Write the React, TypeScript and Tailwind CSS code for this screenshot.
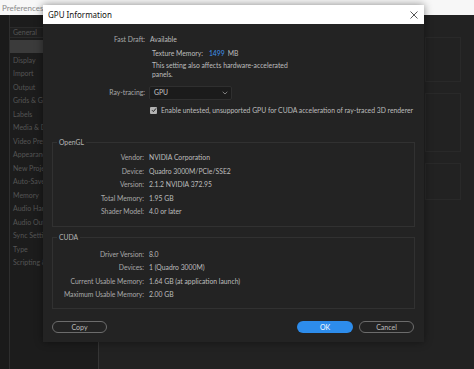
import React from "react";

const sidebarItems = [
  "Display",
  "Import",
  "Output",
  "Grids & Guides",
  "Labels",
  "Media & Disk Cache",
  "Video Preview",
  "Appearance",
  "New Project",
  "Auto-Save",
  "Memory",
  "Audio Hardware",
  "Audio Output",
  "Sync Settings",
  "Type",
  "Scripting & Expressions",
];

function Row({ label, value }: { label: string; value: React.ReactNode }) {
  return (
    <>
      <div className="h-[13.5px] flex items-center justify-end text-[#a9a9a9] whitespace-nowrap">{label}</div>
      <div className="h-[13.5px] flex items-center text-[#bdbdbd] whitespace-nowrap">{value}</div>
    </>
  );
}

export default function App() {
  const font = { fontFamily: 'Lato, "Open Sans", sans-serif' };
  return (
    <div className="relative w-[474px] h-[369px] overflow-hidden bg-[#222222]" style={font}>
      {/* Preferences window (background) */}
      <div className="flex flex-col w-full h-full">
        <div className="h-[15px] bg-[#f7f7f7] flex items-center pl-[2px] text-[8px] text-[#8a8a8a] shrink-0">
          Preferences
        </div>
        <div className="flex flex-1 min-h-0 bg-[#1e1e1e]">
          <div className="w-[9px] bg-[#1a1a1a] shrink-0" />
          <div className="w-[90px] shrink-0 border-l border-[#2e2e2e] border-r border-r-[#353535] bg-[#1c1c1c] pt-[12px] text-[7px] text-[#555555]">
            <div className="h-[11px] flex items-center pl-[3px] border-y border-[#2a2a2a] bg-[#1f1f1f]">General</div>
            <div className="h-[13px] mt-[2px] bg-[#3b3b3b]" />
            {sidebarItems.map((s) => (
              <div key={s} className="h-[13.5px] flex items-center pl-[3px] whitespace-nowrap">
                {s}
              </div>
            ))}
          </div>
          <div className="flex-1 bg-[#222222] flex justify-end pr-[13px]">
            <div className="w-[36px] flex flex-col pt-[22px] gap-[11px]">
              <div className="h-[45px] border border-[#292929]" />
              <div className="h-[59px] border border-[#292929]" />
              <div className="h-[37px] border border-[#292929]" />
            </div>
          </div>
        </div>
      </div>

      {/* GPU Information dialog */}
      <div className="absolute left-[43px] top-[5px] w-[381px] h-[337px] flex flex-col bg-[#232323] shadow-[0_0_8px_rgba(0,0,0,0.45)]">
        <div className="h-[19px] bg-white flex items-center justify-between pl-[5px] pr-[6px] shrink-0">
          <span className="text-[8px] text-[#111]" style={{ fontFamily: '"Noto Sans", "Open Sans", sans-serif' }}>
            GPU Information
          </span>
          <svg width="8" height="8" viewBox="0 0 8 8">
            <path d="M0.5 0.5 L7.5 7.5 M7.5 0.5 L0.5 7.5" stroke="#444" strokeWidth="0.9" />
          </svg>
        </div>

        <div className="flex-1 flex flex-col px-[9px] pb-[9px] text-[6.8px]">
          {/* top section */}
          <div className="grid grid-cols-[93px_1fr] gap-x-[5px] mt-[8.5px]">
            <Row label="Fast Draft:" value="Available" />
          </div>
          <div className="pl-[100px] mt-[1.5px] text-[#bdbdbd]">
            <div className="h-[12px] flex items-center gap-[3px]">
              <span>Texture Memory:</span>
              <span className="text-[#3e92ec] ml-[3px]">1499</span>
              <span>MB</span>
            </div>
            <div className="leading-[9px] mt-[1.5px] w-[145px]">
              This setting also affects hardware-accelerated panels.
            </div>
          </div>
          <div className="grid grid-cols-[93px_1fr] gap-x-[4px] mt-[6.5px] items-center">
            <div className="flex justify-end text-[#a9a9a9]">Ray-tracing:</div>
            <div className="w-[83px] h-[14px] bg-[#1b1b1b] border border-[#2f2f2f] rounded-[2px] flex items-center justify-between pl-[4px] pr-[3px] text-[#c4c4c4]">
              <span>GPU</span>
              <svg width="6" height="4" viewBox="0 0 6 4">
                <path d="M0.7 0.8 L3 3 L5.3 0.8" stroke="#8a8a8a" strokeWidth="0.9" fill="none" />
              </svg>
            </div>
          </div>
          <div className="flex items-center h-[13px] mt-[4px] pl-[98px] gap-[4px] text-[#bdbdbd] whitespace-nowrap">
            <div className="w-[7px] h-[7px] rounded-[1px] bg-[#b3b3b3] flex items-center justify-center">
              <svg width="6" height="6" viewBox="0 0 6 6">
                <path d="M1 3.2 L2.4 4.6 L5 1.4" stroke="#222" strokeWidth="1" fill="none" />
              </svg>
            </div>
            <span>Enable untested, unsupported GPU for CUDA acceleration of ray-traced 3D renderer</span>
          </div>

          {/* OpenGL */}
          <fieldset className="mt-[21px] border border-[#313131] pr-[7px] pb-[8px] pt-[4px]">
            <legend className="ml-[4px] px-[2px] text-[#b5b5b5] leading-[9px]">OpenGL</legend>
            <div className="grid grid-cols-[91px_1fr] gap-x-[5px]">
              <Row label="Vendor:" value="NVIDIA Corporation" />
              <Row label="Device:" value="Quadro 3000M/PCIe/SSE2" />
              <Row label="Version:" value="2.1.2 NVIDIA 372.95" />
              <Row label="Total Memory:" value="1.95 GB" />
              <Row label="Shader Model:" value="4.0 or later" />
            </div>
          </fieldset>

          {/* CUDA */}
          <fieldset className="mt-[6px] border border-[#313131] pr-[7px] pb-[7px] pt-[5px]">
            <legend className="ml-[4px] px-[2px] text-[#b5b5b5] leading-[9px]">CUDA</legend>
            <div className="grid grid-cols-[91px_1fr] gap-x-[5px]">
              <Row label="Driver Version:" value="8.0" />
              <Row label="Devices:" value="1 (Quadro 3000M)" />
              <Row label="Current Usable Memory:" value="1.64 GB (at application launch)" />
              <Row label="Maximum Usable Memory:" value="2.00 GB" />
            </div>
          </fieldset>

          <div className="mt-auto flex items-center pr-[1px]">
            <button className="w-[55px] h-[12px] rounded-full border border-[#6c6c6c] text-[#bdbdbd] text-[7px] flex items-center justify-center">
              Copy
            </button>
            <div className="flex-1" />
            <button className="w-[56px] h-[12px] rounded-full bg-[#2d8ceb] text-white text-[7px] flex items-center justify-center">
              OK
            </button>
            <button className="ml-[6px] w-[55px] h-[12px] rounded-full border border-[#6c6c6c] text-[#bdbdbd] text-[7px] flex items-center justify-center">
              Cancel
            </button>
          </div>
        </div>
      </div>
    </div>
  );
}
